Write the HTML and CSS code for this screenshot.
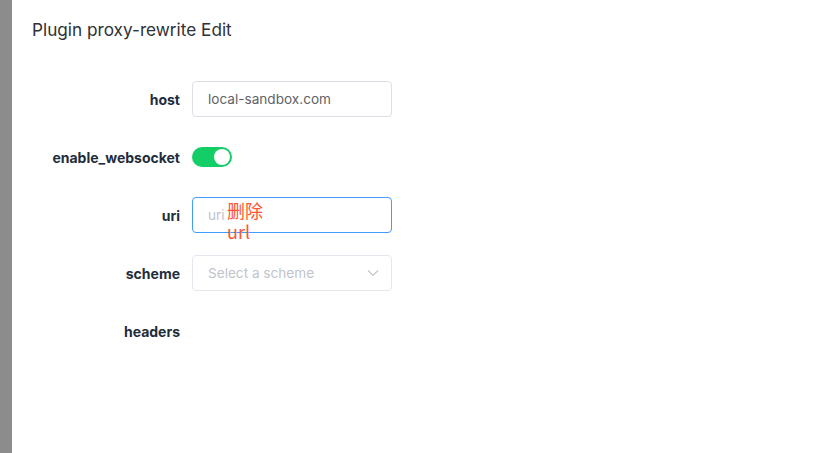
FILE: index.html
```html
<!DOCTYPE html>
<html>
<head>
<meta charset="utf-8">
<link rel="stylesheet" href="styles.css">
</head>
<body>
<div class="page">
  <div class="side"></div>
  <div class="panel">
    <h1 class="title">Plugin proxy-rewrite Edit</h1>
    <form class="form">
      <div class="item">
        <label class="label">host</label>
        <div class="control"><div class="input"><span class="value">local-sandbox.com</span></div></div>
      </div>
      <div class="item">
        <label class="label">enable_websocket</label>
        <div class="control"><span class="switch"><span class="knob"></span></span></div>
      </div>
      <div class="item">
        <label class="label">uri</label>
        <div class="control">
          <div class="input focus"><span class="placeholder">uri</span></div>
          <div class="note">删除<br>url</div>
        </div>
      </div>
      <div class="item">
        <label class="label">scheme</label>
        <div class="control">
          <div class="input select"><span class="placeholder">Select a scheme</span>
            <svg class="chev" width="12" height="8" viewBox="0 0 12 8"><path d="M1 1.5 L6 6.5 L11 1.5" fill="none" stroke="#c0c4cc" stroke-width="1.1"/></svg>
          </div>
        </div>
      </div>
      <div class="item">
        <label class="label">headers</label>
        <div class="control"></div>
      </div>
    </form>
  </div>
</div>
</body>
</html>
```
FILE: styles.css
```css
html, body { margin: 0; padding: 0; }
body {
  font-family: Inter, "Noto Sans", "Liberation Sans", "Noto Sans CJK SC", sans-serif;
  background: #fff;
  width: 815px;
  height: 453px;
  overflow: hidden;
}
.page { display: flex; height: 453px; }
.side { width: 12px; background: #8c8c8c; flex: none; }
.panel { flex: 1; padding: 18px 0 0 20px; }
.title {
  margin: 0;
  font-size: 17.2px;
  font-weight: 400;
  line-height: 24px;
  color: #303133;
}
.form { margin-top: 39px; display: flex; flex-direction: column; gap: 22px; }
.item { display: flex; align-items: center; height: 36px; }
.label {
  width: 148px;
  padding-right: 12px;
  text-align: right;
  font-size: 14px;
  font-weight: 700;
  color: #1f2d3d;
}
.control { position: relative; display: flex; align-items: center; }
.input {
  box-sizing: border-box;
  width: 200px;
  height: 36px;
  border: 1px solid #dcdfe6;
  border-radius: 4px;
  padding: 0 15px;
  display: flex;
  align-items: center;
  font-size: 13.6px;
  color: #606266;
}
.input.focus { border-color: #409eff; }
.input.select { justify-content: space-between; border-color: #e4e7ed; }
.placeholder { color: #c0c4cc; }
.chev { margin-right: -3px; }
.switch {
  position: relative;
  display: inline-block;
  width: 40px;
  height: 20px;
  border-radius: 10px;
  background: #13ce66;
}
.knob {
  position: absolute;
  top: 2px;
  right: 2px;
  width: 16px;
  height: 16px;
  border-radius: 50%;
  background: #fff;
}
.note {
  position: absolute;
  left: 35px;
  top: 3px;
  font-size: 18px;
  line-height: 21px;
  color: #ff5330;
  font-family: "Noto Sans CJK SC", "Noto Sans", sans-serif;
}
```
